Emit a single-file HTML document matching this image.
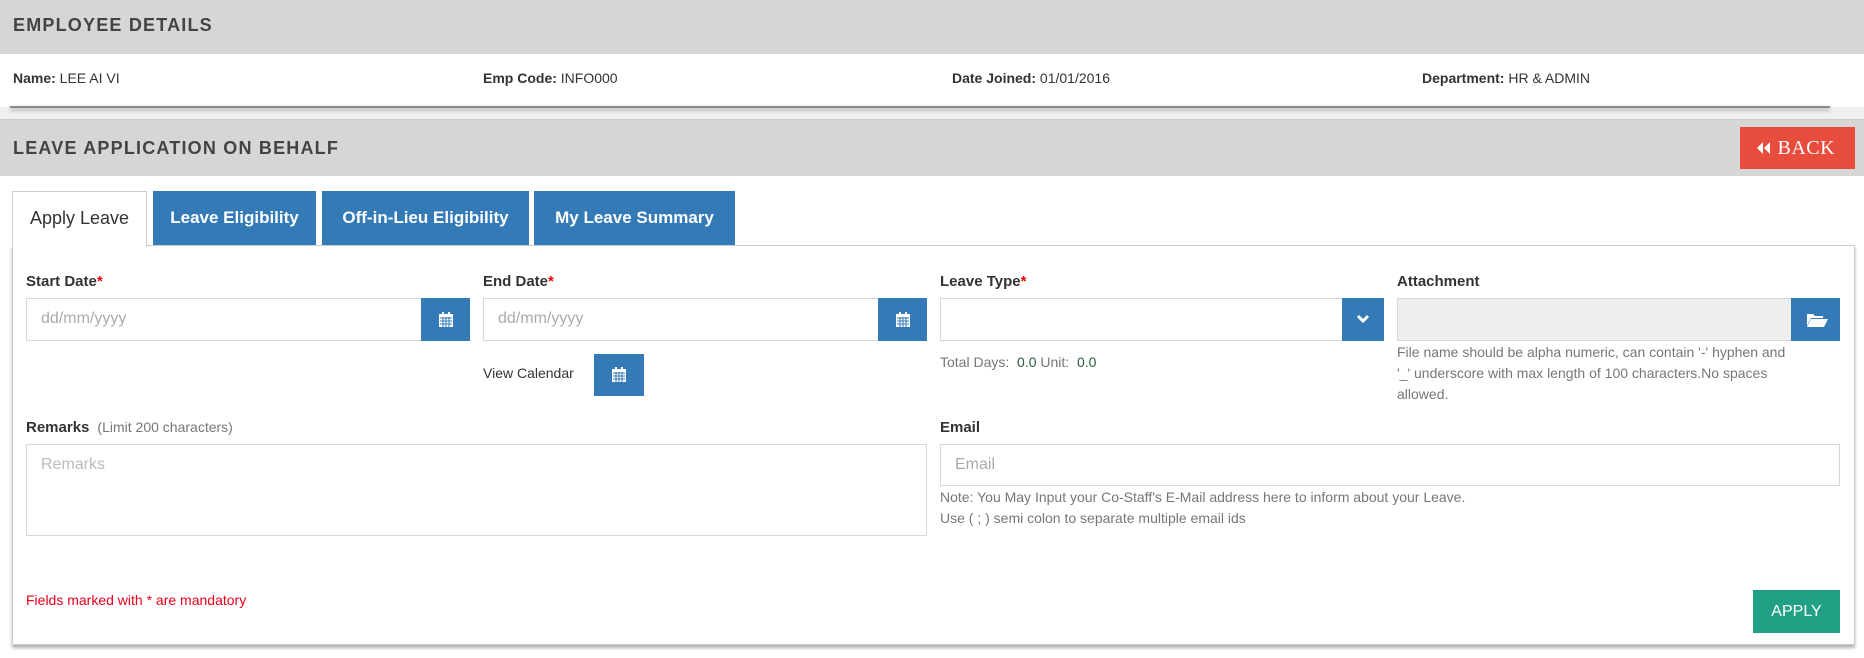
<!DOCTYPE html>
<html><head><meta charset="utf-8"><style>
*{box-sizing:border-box;margin:0;padding:0}
body{width:1864px;height:658px;background:#fff;font-family:"Liberation Sans",sans-serif;position:relative;overflow:hidden;color:#333}
.a{position:absolute}
.hdr{background:#d6d6d6;left:0;width:1864px}
.title{font-size:18px;font-weight:bold;letter-spacing:1.2px;color:#444;left:13px}
.info{font-size:14px;top:70px;color:#333}
.info b{font-weight:bold}
.tab{top:191px;height:54px;background:#337ab7;color:#fff;font-size:17px;font-weight:bold;line-height:54px;text-align:center}
.lbl{font-size:15px;font-weight:bold;color:#333}
.lbl i{color:#e00;font-style:normal}
.inp{border:1px solid #d4d7e0;background:#fff;font-size:16px;color:#aaa;padding-left:14px;line-height:40px}
.btn{background:#337ab7}
.help{font-size:14px;color:#777;line-height:21px}
</style></head><body>
<div class="a hdr" style="top:0;height:54px"></div>
<div class="a title" style="top:15px">EMPLOYEE DETAILS</div>
<div class="a info" style="left:13px"><b>Name:</b> LEE AI VI</div>
<div class="a info" style="left:483px"><b>Emp Code:</b> INFO000</div>
<div class="a info" style="left:952px"><b>Date Joined:</b> 01/01/2016</div>
<div class="a info" style="left:1422px"><b>Department:</b> HR &amp; ADMIN</div>
<div class="a" style="top:107px;left:0;width:1864px;height:13px;background:#f0f0f0;border-bottom:1px solid #ccc"></div>
<div class="a" style="top:106px;left:10px;width:1820px;height:2px;background:#888;box-shadow:0 2px 4px rgba(0,0,0,0.4)"></div>
<div class="a hdr" style="top:120px;height:56px"></div>
<div class="a title" style="top:138px">LEAVE APPLICATION ON BEHALF</div>
<div class="a" style="left:1740px;top:127px;width:115px;height:42px;background:#e74c3c;color:#fff;font-family:'Liberation Serif',serif;font-size:20px;letter-spacing:0.5px;line-height:42px;padding-left:16px">
<svg width="16" height="16" viewBox="0 0 16 16" style="vertical-align:-2px"><path d="M1 8L7 2V14Z M8 8L14 2V14Z" fill="#fff"/></svg>&nbsp;BACK</div>

<div class="a" style="left:12px;top:245px;width:1843px;height:400px;border:1px solid #ccc;box-shadow:0 3px 3px rgba(0,0,0,0.3)"></div>
<div class="a" style="left:12px;top:191px;width:135px;height:56px;border:1px solid #ccc;border-bottom:none;background:#fff;font-size:18px;line-height:52px;text-align:center;color:#333">Apply Leave</div>
<div class="a tab" style="left:153px;width:163px">Leave Eligibility</div>
<div class="a tab" style="left:322px;width:207px">Off-in-Lieu Eligibility</div>
<div class="a tab" style="left:534px;width:201px">My Leave Summary</div>

<div class="a lbl" style="left:26px;top:273px">Start Date<i>*</i></div>
<div class="a lbl" style="left:483px;top:273px">End Date<i>*</i></div>
<div class="a lbl" style="left:940px;top:273px">Leave Type<i>*</i></div>
<div class="a lbl" style="left:1397px;top:273px">Attachment</div>

<div class="a inp" style="left:26px;top:298px;width:396px;height:43px">dd/mm/yyyy</div>
<div class="a btn" style="left:421px;top:298px;width:49px;height:43px"><svg class="a" style="left:17px;top:13px" width="16" height="17" viewBox="0 0 16 17"><rect x="1" y="3" width="14" height="13" fill="#fff"/><rect x="4" y="1" width="2" height="4" fill="#fff"/><rect x="10" y="1" width="2" height="4" fill="#fff"/><path d="M2 7H14M2 10H14M2 13H14M5 6V16M8 6V16M11 6V16" stroke="#337ab7" stroke-width="1"/></svg></div>
<div class="a inp" style="left:483px;top:298px;width:396px;height:43px">dd/mm/yyyy</div>
<div class="a btn" style="left:878px;top:298px;width:49px;height:43px"><svg class="a" style="left:17px;top:13px" width="16" height="17" viewBox="0 0 16 17"><rect x="1" y="3" width="14" height="13" fill="#fff"/><rect x="4" y="1" width="2" height="4" fill="#fff"/><rect x="10" y="1" width="2" height="4" fill="#fff"/><path d="M2 7H14M2 10H14M2 13H14M5 6V16M8 6V16M11 6V16" stroke="#337ab7" stroke-width="1"/></svg></div>
<div class="a inp" style="left:940px;top:298px;width:403px;height:43px"></div>
<div class="a btn" style="left:1342px;top:298px;width:42px;height:43px"><svg class="a" style="left:14px;top:16px" width="14" height="10" viewBox="0 0 14 10"><path d="M2 2L7 7L12 2" stroke="#fff" stroke-width="3" fill="none"/></svg></div>
<div class="a inp" style="left:1397px;top:298px;width:395px;height:43px;background:#eee"></div>
<div class="a btn" style="left:1791px;top:298px;width:49px;height:43px"><svg class="a" style="left:15px;top:13px" width="22" height="17" viewBox="0 0 22 17"><path d="M1 3H7L9 5H17V7H5L1 15Z" fill="#fff"/><path d="M5 8H22L18 16H1Z" fill="#fff"/></svg></div>

<div class="a" style="left:483px;top:365px;font-size:14px;color:#333">View Calendar</div>
<div class="a btn" style="left:594px;top:354px;width:50px;height:42px"><svg class="a" style="left:17px;top:12px" width="16" height="17" viewBox="0 0 16 17"><rect x="1" y="3" width="14" height="13" fill="#fff"/><rect x="4" y="1" width="2" height="4" fill="#fff"/><rect x="10" y="1" width="2" height="4" fill="#fff"/><path d="M2 7H14M2 10H14M2 13H14M5 6V16M8 6V16M11 6V16" stroke="#337ab7" stroke-width="1"/></svg></div>
<div class="a" style="left:940px;top:354px;font-size:14px;color:#777">Total Days:&nbsp; <span style="color:#2a5a3a">0.0</span> Unit:&nbsp; <span style="color:#2a5a3a">0.0</span></div>
<div class="a help" style="left:1397px;top:342px;width:395px">File name should be alpha numeric, can contain '-' hyphen and '_' underscore with max length of 100 characters.No spaces allowed.</div>

<div class="a lbl" style="left:26px;top:419px">Remarks <span style="font-weight:normal;color:#777;font-size:14px">&nbsp;(Limit 200 characters)</span></div>
<div class="a lbl" style="left:940px;top:419px">Email</div>
<div class="a inp" style="left:26px;top:444px;width:901px;height:92px;line-height:1;padding-top:12px;color:#bbb">Remarks</div>
<div class="a inp" style="left:940px;top:444px;width:900px;height:42px;color:#aaa">Email</div>
<div class="a help" style="left:940px;top:487px">Note: You May Input your Co-Staff's E-Mail address here to inform about your Leave.<br>Use ( ; ) semi colon to separate multiple email ids</div>

<div class="a" style="left:26px;top:592px;font-size:14px;color:#e8001c">Fields marked with * are mandatory</div>
<div class="a" style="left:1753px;top:590px;width:87px;height:43px;background:#22a085;color:#fff;font-size:16px;line-height:43px;text-align:center">APPLY</div>
</body></html>
